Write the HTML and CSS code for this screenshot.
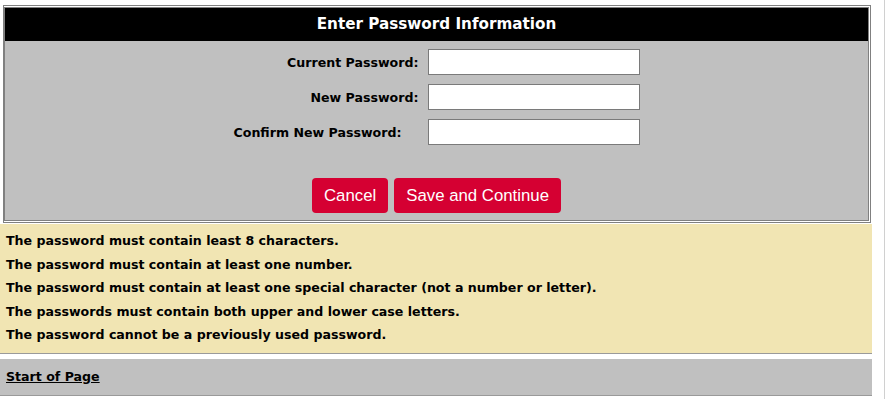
FILE: index.html
```html
<!DOCTYPE html>
<html>
<head>
<meta charset="utf-8">
<link rel="stylesheet" href="styles.css">
</head>
<body>
<div class="page">
  <div class="main">
    <div class="frame">
      <div class="inner">
        <div class="title">Enter Password Information</div>
        <div class="form">
          <label class="lbl">Current Password:</label>
          <input class="field" type="password">
          <label class="lbl">New Password:</label>
          <input class="field" type="password">
          <label class="lbl lbl-left">Confirm New Password:</label>
          <input class="field" type="password">
        </div>
        <div class="actions">
          <button class="btn">Cancel</button>
          <button class="btn">Save and Continue</button>
        </div>
      </div>
    </div>
    <div class="rules">
      <p>The password must contain least 8 characters.</p>
      <p>The password must contain at least one number.</p>
      <p>The password must contain at least one special character (not a number or letter).</p>
      <p>The passwords must contain both upper and lower case letters.</p>
      <p>The password cannot be a previously used password.</p>
    </div>
    <div class="footer"><a href="#" class="top-link">Start of Page</a></div>
  </div>
  <div class="edge"></div>
</div>
</body>
</html>
```
FILE: styles.css
```css
html, body {
  margin: 0;
  padding: 0;
  background: #ffffff;
}
body {
  font-family: "DejaVu Sans", Verdana, sans-serif;
  font-weight: bold;
  font-size: 12.6px;
  color: #000;
}
.page {
  display: flex;
  min-height: 399px;
}
.main {
  width: 872px;
  flex: none;
}
.edge {
  flex: 1;
  border-right: 1px solid #d0d0d0;
  margin-right: 1px;
}
.frame {
  margin: 5px 1px 0 3px;
  border: 1px solid #808080;
  padding: 1px 1px 1px 0;
  background: #ffffff;
}
.inner {
  border: 1px solid #808080;
  background: #c0c0c0;
  padding-bottom: 7px;
}
.title {
  background: #000;
  color: #fff;
  text-align: center;
  height: 33px;
  line-height: 33px;
  font-size: 15.2px;
}
.form {
  display: grid;
  grid-template-columns: 188px 212px;
  column-gap: 6px;
  row-gap: 9px;
  justify-content: center;
  align-items: center;
  margin-top: 8px;
}
.lbl {
  text-align: right;
  padding-right: 3px;
}
.lbl-left {
  text-align: left;
  padding-right: 0;
}
.field {
  box-sizing: border-box;
  width: 212px;
  height: 26px;
  margin: 0;
  border: 1px solid #7a7a7a;
  background: #fff;
  padding: 2px 4px;
}
.actions {
  display: flex;
  justify-content: center;
  gap: 6px;
  margin-top: 33px;
}
.btn {
  font-family: "Liberation Sans", Arial, sans-serif;
  font-weight: normal;
  font-size: 16.8px;
  color: #fff;
  background: #d50032;
  border: none;
  border-radius: 4px;
  height: 35px;
  padding: 0 12px;
  margin: 0;
}
.rules {
  margin-top: 1px;
  background: #f1e5b3;
  border-bottom: 1px solid #9a9a9a;
  padding: 5px 6px 6px;
}
.rules p {
  margin: 0;
  line-height: 23.5px;
}
.footer {
  margin-top: 5px;
  background: #c0c0c0;
  border-bottom: 1px solid #9a9a9a;
  height: 36px;
  line-height: 36px;
  padding: 0 6px;
}
.top-link {
  color: #000;
  text-decoration: underline;
}
```
